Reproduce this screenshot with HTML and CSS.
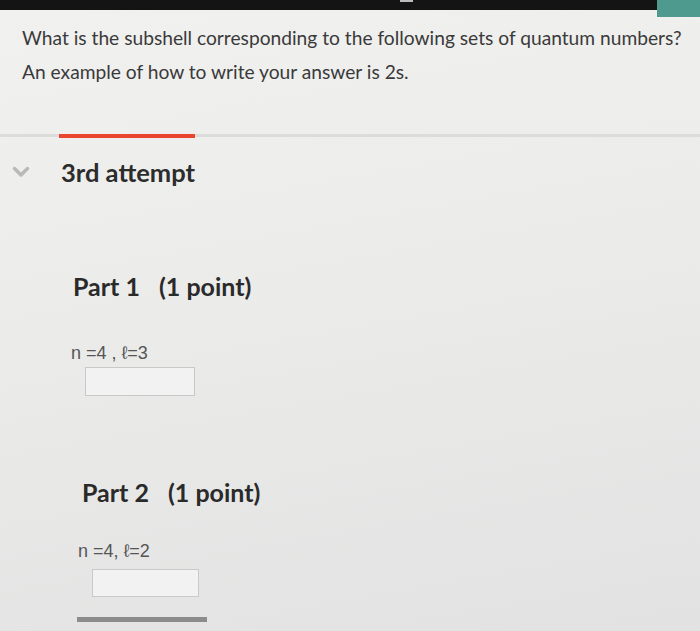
FILE: index.html
```html
<!DOCTYPE html>
<html>
<head>
<meta charset="utf-8">
<link rel="stylesheet" href="styles.css">
</head>
<body>
<div class="page">
  <div class="topbar">
    <span class="mark"></span>
    <span class="teal"></span>
  </div>
  <div class="question">
    <p>What is the subshell corresponding to the following sets of quantum numbers?</p>
    <p>An example of how to write your answer is 2s.</p>
  </div>
  <div class="divider"><span class="progress"></span></div>
  <div class="attempt">
    <svg class="chev" width="18" height="12" viewBox="0 0 18 12"><path d="M2.5 2.5 L9 9 L15.5 2.5" fill="none" stroke="#b9b9b9" stroke-width="3.5" stroke-linecap="round" stroke-linejoin="round"/></svg>
    <span class="attempt-title">3rd attempt</span>
  </div>
  <div class="part part1">
    <h2 class="part-title"><span>Part 1</span><span>(1 point)</span></h2>
    <div class="qn">n =4 , ℓ=3</div>
    <div class="answer"></div>
  </div>
  <div class="part part2">
    <h2 class="part-title"><span>Part 2</span><span>(1 point)</span></h2>
    <div class="qn">n =4, ℓ=2</div>
    <div class="answer"></div>
  </div>
  <div class="bottombar"></div>
</div>
</body>
</html>
```
FILE: styles.css
```css
html, body {
  margin: 0;
  padding: 0;
}
body {
  width: 700px;
  height: 631px;
  overflow: hidden;
  font-family: Lato, "Open Sans", sans-serif;
  background: linear-gradient(170deg, #f1f1f0 0%, #ececeb 40%, #e2e2e2 100%);
  color: #333;
}
.page {
  height: 631px;
}
.topbar {
  display: flex;
  align-items: flex-start;
  height: 10px;
  background: #141414;
}
.mark {
  margin-left: 400px;
  width: 13px;
  height: 2px;
  background: #bdbdbd;
}
.teal {
  margin-left: auto;
  width: 43px;
  height: 17px;
  background: #4f9a8f;
}
.question {
  padding: 11px 0 0 22px;
  color: #3a3a3a;
  font-size: 19.2px;
}
.question p {
  margin: 0;
  line-height: 34px;
  white-space: nowrap;
}
.divider {
  margin-top: 45px;
  height: 3px;
  background: #dcdcdb;
  display: flex;
  align-items: center;
}
.progress {
  margin-left: 59px;
  width: 136px;
  height: 4px;
  background: #ea4530;
}
.attempt {
  margin-top: 20px;
  display: flex;
  align-items: center;
  height: 30px;
}
.chev {
  margin-left: 12px;
}
.attempt-title {
  margin-left: 31px;
  font-size: 25.5px;
  font-weight: 700;
  color: #2c2c2c;
}
.part-title {
  margin: 0;
  display: flex;
  gap: 19px;
  height: 30px;
  align-items: center;
  font-size: 25px;
  font-weight: 700;
  color: #2a2a2a;
}
.qn {
  height: 20px;
  line-height: 20px;
  font-family: "Liberation Sans", Arial, sans-serif;
  font-size: 18px;
  color: #555;
}
.answer {
  border: 1px solid #c9c9c9;
  background: #f2f2f2;
  box-sizing: border-box;
}
.part1 {
  margin-top: 84px;
}
.part1 .part-title { padding-left: 73px; }
.part1 .qn { margin-top: 42px; padding-left: 71px; }
.part1 .answer { margin: 4px 0 0 85px; width: 110px; height: 29px; }
.part2 {
  margin-top: 81px;
}
.part2 .part-title { padding-left: 82px; }
.part2 .qn { margin-top: 34px; padding-left: 78px; }
.part2 .answer { margin: 8px 0 0 92px; width: 107px; height: 28px; }
.bottombar {
  margin: 20px 0 0 77px;
  width: 130px;
  height: 5px;
  background: #8c8c8c;
}
```
